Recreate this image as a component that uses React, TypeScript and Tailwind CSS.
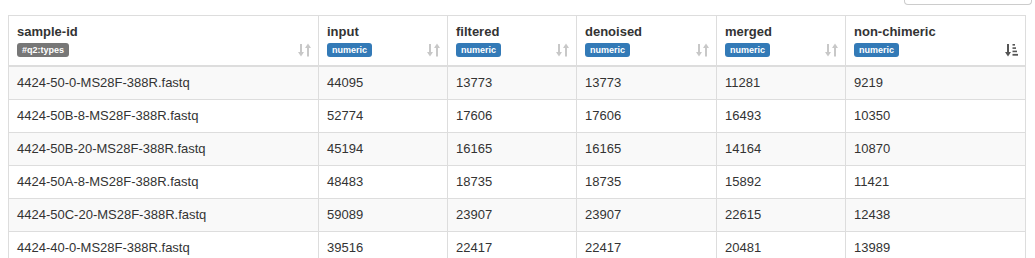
import React from "react";

type Col = { key: string; label: string; type: string; width: string; sorted?: boolean };

const COLUMNS: Col[] = [
  { key: "id", label: "sample-id", type: "#q2:types", width: "w-[310px]" },
  { key: "input", label: "input", type: "numeric", width: "w-[129px]" },
  { key: "filtered", label: "filtered", type: "numeric", width: "w-[129px]" },
  { key: "denoised", label: "denoised", type: "numeric", width: "w-[140px]" },
  { key: "merged", label: "merged", type: "numeric", width: "w-[129px]" },
  { key: "nonchim", label: "non-chimeric", type: "numeric", width: "w-[180px]", sorted: true },
];

const ROWS = [
  ["4424-50-0-MS28F-388R.fastq", "44095", "13773", "13773", "11281", "9219"],
  ["4424-50B-8-MS28F-388R.fastq", "52774", "17606", "17606", "16493", "10350"],
  ["4424-50B-20-MS28F-388R.fastq", "45194", "16165", "16165", "14164", "10870"],
  ["4424-50A-8-MS28F-388R.fastq", "48483", "18735", "18735", "15892", "11421"],
  ["4424-50C-20-MS28F-388R.fastq", "59089", "23907", "23907", "22615", "12438"],
  ["4424-40-0-MS28F-388R.fastq", "39516", "22417", "22417", "20481", "13989"],
];

function SortBoth() {
  return (
    <svg width="13" height="14" viewBox="0 0 13 14" className="shrink-0">
      <g fill="#c8c8c8">
        <rect x="2" y="1" width="2" height="9" />
        <polygon points="0,9 6,9 3,13.5" />
        <rect x="9" y="4" width="2" height="9.5" />
        <polygon points="7,5 13,5 10,0.5" />
      </g>
    </svg>
  );
}

function SortAsc() {
  return (
    <svg width="13" height="14" viewBox="0 0 13 14" className="shrink-0">
      <g fill="#555">
        <rect x="2" y="1" width="2" height="9" />
        <polygon points="0,9 6,9 3,13.5" />
        <rect x="7.5" y="1" width="2.5" height="1.6" />
        <rect x="7.5" y="4.3" width="3.5" height="1.6" />
        <rect x="7.5" y="7.6" width="4.5" height="1.6" />
        <rect x="7.5" y="10.9" width="5.5" height="1.8" />
      </g>
    </svg>
  );
}

export default function App() {
  return (
    <div className="w-[1035px] h-[258px] overflow-hidden bg-white font-['Liberation_Sans',Arial,sans-serif] text-[#333]">
      {/* search box, cut off at the top */}
      <div className="flex justify-end">
        <div className="w-[128px] h-[5px] mr-[3px] border-x border-b border-[#ccc] rounded-b-[4px]" />
      </div>

      <table className="ml-[8px] mt-[10px] w-[1017px] table-fixed border-collapse border border-[#ddd]">
        <colgroup>
          {COLUMNS.map((c) => (
            <col key={c.key} className={c.width} />
          ))}
        </colgroup>
        <thead>
          <tr>
            {COLUMNS.map((c) => (
              <th
                key={c.key}
                className="border border-[#ddd] border-b-2 pl-2 pr-[7px] pt-2 pb-2 text-left align-bottom"
              >
                <div className="flex items-end justify-between">
                  <div className="flex flex-col items-start">
                    <span className="text-[13px] leading-[16px] font-bold text-[#333]">{c.label}</span>
                    <span
                      className={
                        "mt-[3px] h-[14px] px-[5px] rounded-[3px] text-[9px] leading-[14px] font-bold text-white " +
                        (c.type === "numeric" ? "bg-[#337ab7]" : "bg-[#777]")
                      }
                    >
                      {c.type}
                    </span>
                  </div>
                  {c.sorted ? <SortAsc /> : <SortBoth />}
                </div>
              </th>
            ))}
          </tr>
        </thead>
        <tbody>
          {ROWS.map((r, i) => (
            <tr key={r[0]} className={i % 2 === 0 ? "bg-[#f9f9f9]" : "bg-white"}>
              {r.map((v, j) => (
                <td key={j} className="border border-[#ddd] px-2 py-2 text-[13px] leading-[16px]">
                  {v}
                </td>
              ))}
            </tr>
          ))}
        </tbody>
      </table>
    </div>
  );
}
